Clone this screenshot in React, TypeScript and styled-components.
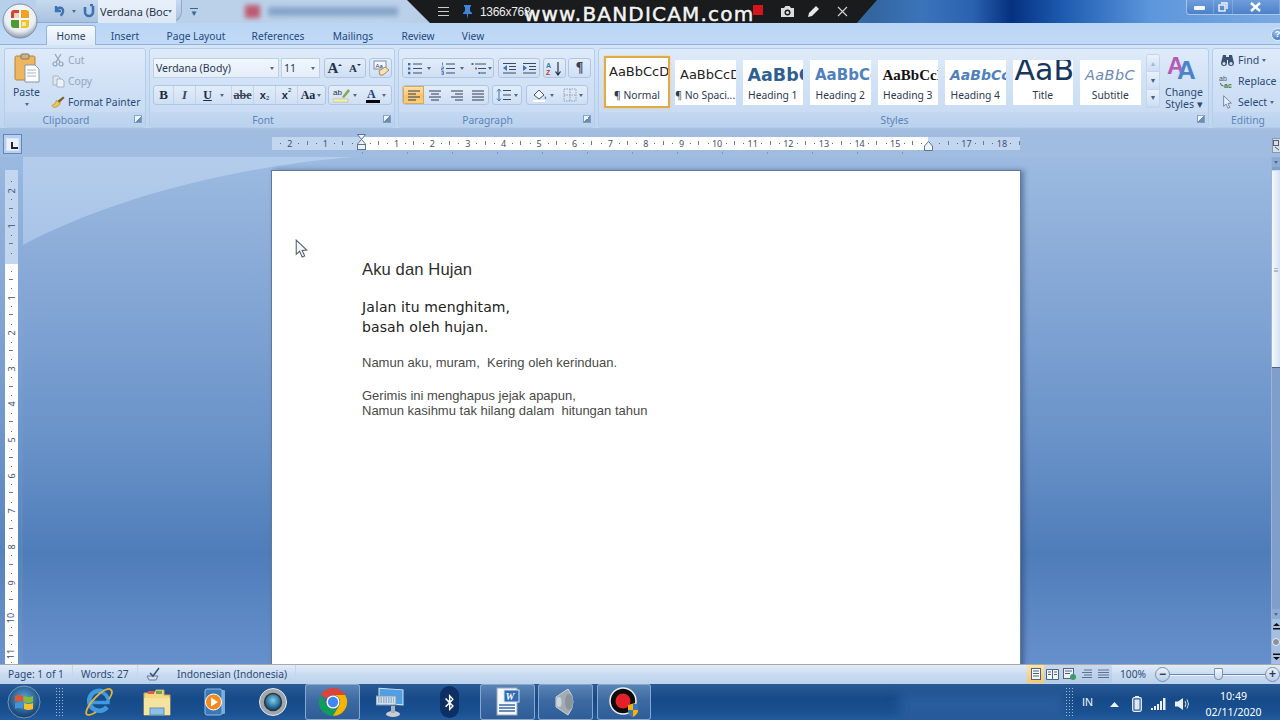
import React from "react";
import styled, { createGlobalStyle } from "styled-components";
import { FaBluetoothB } from "react-icons/fa";

const Global = createGlobalStyle`
  html, body { margin: 0; padding: 0; width: 1280px; height: 720px; overflow: hidden; background: #5d8ac8; }
  * { box-sizing: border-box; }
  #root { width: 1280px; height: 720px; }
`;

const UI = `"Noto Sans", "Open Sans", sans-serif`;

const Screen = styled.div`
  position: relative; width: 1280px; height: 720px; overflow: hidden;
  display: flex; flex-direction: column; font-family: ${UI}; font-size: 10.5px; color: #1f3a62;
`;

/* ---------- title bar ---------- */
const TitleBar = styled.div`
  position: relative; height: 23px; flex: none; display: flex; align-items: center; padding-left: 36px;
  background: linear-gradient(90deg, #b7cfe9 0, #bdd3ea 30%, #b9cfe8 33%, #33669f 68%, #3b74ba 72%, #2a62b0 76%, #05307f 79%, #1c5bb0 83%, #5d97dc 90%, #7aa9e0 100%);
`;
const Qat = styled.div`
  height: 23px; width: 146px; display: flex; align-items: center; gap: 0; padding-left: 14px;
  border: 1px solid #8ea9c9; border-top: 0; border-left: 0; border-radius: 0 0 12px 0;
  background: linear-gradient(#c6d9ee, #a9c3e0);
`;
const QatIcon = styled.span<{ $w: number }>`
  width: ${(p) => p.$w}px; display: flex; justify-content: center; align-items: center; height: 20px;
`;
const QatCombo = styled.div`
  width: 78px; height: 23px; display: flex; align-items: center; justify-content: space-between;
  background: linear-gradient(#e8f0fa, #dde8f5); padding: 0 5px 0 2px; color: #28374a; font-size: 11px; white-space: nowrap; overflow: hidden;
`;
const Customize = styled.span`
  margin-left: 8px; color: #3c6192; font-size: 8px; line-height: 8px; border-top: 1px solid #3c6192; margin-top: 1px;
`;
const BlurredTitle = styled.div`
  margin-left: 47px; display: flex; align-items: center; gap: 8px; filter: blur(2.5px);
`;
const BlurRed = styled.span`
  width: 15px; height: 13px; background: #bd5a6e; display: block;
`;
const BlurText = styled.span`
  width: 130px; height: 9px; background: #86a3ca; display: block;
`;
const WindowButtons = styled.div`
  position: absolute; right: 0; top: 0; height: 15px; width: 94px; display: flex;
  border: 1px solid #c9dcf3aa; border-top: 0; border-right: 0; border-radius: 0 0 0 4px;
  background: linear-gradient(#6f9ddc, #4c82c8);
`;
const WindowButton = styled.span<{ $w: number }>`
  width: ${(p) => p.$w}px; display: flex; align-items: center; justify-content: center;
  border-right: 1px solid #a9c5ea66;
`;
const OfficeOrbWrap = styled.div`
  position: absolute; left: 2px; top: 3px; width: 36px; height: 36px; z-index: 3;
`;

/* bandicam overlay */
const Bandicam = styled.div`
  position: absolute; left: 407px; top: 0; width: 470px; height: 23px; z-index: 4;
  background: #1a1b1d; clip-path: polygon(0 0, 100% 0, 95.7% 100%, 4.9% 100%);
  display: flex; align-items: center; color: #e8e8e8;
`;
const BarLines = styled.span`
  margin-left: 31px; width: 11px; height: 9px; border-top: 1px solid #ccc; border-bottom: 1px solid #ccc; position: relative;
  &::after { content: ""; position: absolute; left: 0; right: 0; top: 3px; border-top: 1px solid #ccc; }
`;
const BarPin = styled.span`
  margin-left: 14px; display: flex;
`;
const BarRes = styled.span`
  margin-left: 8px; font-family: "Liberation Sans", sans-serif; font-size: 12px; color: #eee; letter-spacing: -0.3px; width: 44px; white-space: nowrap;
`;
const Watermark = styled.span`
  font-family: "DejaVu Sans", sans-serif; font-size: 20px; font-weight: 400; color: #f4f4f4; letter-spacing: 1.2px;
  white-space: nowrap; width: 229px; -webkit-text-stroke: 0.5px #f4f4f4; text-shadow: 0 0 1px #000; margin-top: 5px; line-height: 18px;
`;
const RedSquare = styled.span`
  width: 10px; height: 10px; background: #d6141c; margin-top: -3px;
`;
const BarTool = styled.span<{ $ml: number }>`
  margin-left: ${(p) => p.$ml}px; display: flex;
`;

/* ---------- tabs ---------- */
const TabRow = styled.div`
  position: relative; height: 22px; flex: none; display: flex; align-items: flex-end; padding-left: 46px;
  background: linear-gradient(#bad5f5, #c2daf6); border-bottom: 1px solid #8fb4dc;
`;
const Tab = styled.div<{ $active?: boolean; $w: number }>`
  width: ${(p) => p.$w}px; height: 20px; display: flex; align-items: center; justify-content: center; padding-top: 1px;
  font-size: 10.2px; white-space: nowrap; color: ${(p) => (p.$active ? "#2a3f5f" : "#234a80")};
  margin-bottom: -1px;
  ${(p) => p.$active && `background: linear-gradient(#f8fbff, #dde9f8); border: 1px solid #94b6dc; border-bottom: 0; border-radius: 3px 3px 0 0;`}
`;
const Help = styled.span`
  position: absolute; right: -4px; top: 5px; width: 13px; height: 13px; border-radius: 50%;
  background: radial-gradient(circle at 40% 30%, #9cc4f0, #2a66b8); color: #fff; border: 1px solid #e6f0fc;
  font: bold 9px/11px "Liberation Sans", sans-serif; text-align: center;
`;

/* ---------- ribbon ---------- */
const Ribbon = styled.div`
  height: 85px; flex: none; display: flex; gap: 3px; padding: 3px 0 2px 4px;
  background: linear-gradient(#d5e5f8, #bfd6f1); border-bottom: 2px solid #a5c0dc;
`;
const Group = styled.section<{ $w: number }>`
  width: ${(p) => p.$w}px; flex: none; height: 80px; display: flex; flex-direction: column;
  background: linear-gradient(#dfebfa 0, #d5e4f7 30%, #c4d9f2 100%);
  border: 1px solid #b4cde8; border-radius: 3px; overflow: hidden;
`;
const GroupBody = styled.div<{ $pl?: number; $pt?: number }>`
  flex: 1; min-height: 0; display: flex; padding: ${(p) => p.$pt ?? 9}px 0 0 ${(p) => p.$pl ?? 3}px;
`;
const GroupLabel = styled.div<{ $plain?: boolean }>`
  height: 15px; flex: none; position: relative; text-align: center; line-height: 16px; font-size: 10.3px; color: #5d83b8;
  padding-right: ${(p) => (p.$plain ? 0 : 18)}px;
  background: linear-gradient(#c3d8f1, #bad2ee);
`;
const Launcher = styled.span`
  position: absolute; right: 3px; top: 3px; width: 8px; height: 8px; border: 1px solid #7f9dc4; border-top-color: #8fa8cc; background: linear-gradient(135deg, #eef4fb 50%, #6c8cb8 50%);
`;
const PasteCol = styled.div`
  width: 43px; flex: none; display: flex; flex-direction: column; align-items: center; margin-top: -5px; margin-left: -3px; color: #2c4a75;
`;
const PasteLabel = styled.span`
  margin-top: 2px; margin-bottom: 4px; line-height: 14px; font-size: 10.5px;
`;
const Caret = styled.span`
  display: inline-block; width: 0; height: 0; border: 2.5px solid transparent; border-top: 3px solid #55688a; border-bottom: 0; flex: none;
`;
const ClipCol = styled.div`
  display: flex; flex-direction: column; gap: 5px; margin-top: -6px; margin-left: 3px;
`;
const ClipItem = styled.div<{ $off?: boolean }>`
  display: flex; align-items: center; height: 16px; gap: 3px; white-space: nowrap; font-size: 10.3px;
  color: ${(p) => (p.$off ? "#93a6c0" : "#2a4a78")};
`;
const ClipIcon = styled.span`
  width: 14px; display: flex; justify-content: center;
`;
const Col = styled.div`
  display: flex; flex-direction: column; gap: 7px;
`;
const Row = styled.div`
  display: flex; align-items: center; height: 20px;
`;
const Combo = styled.div<{ $w: number; $ml?: number }>`
  width: ${(p) => p.$w}px; height: 20px; display: flex; align-items: center; justify-content: space-between; padding: 0 4px 0 2px;
  margin-left: ${(p) => p.$ml ?? 0}px;
  background: linear-gradient(#f2f7fd, #e4edf9); border: 1px solid #bdd0e8; font-size: 10.5px; color: #2a3750;
`;
const BtnGroup = styled.div<{ $w: number; $ml?: number }>`
  width: ${(p) => p.$w}px; height: 20px; display: flex; align-items: center; flex: none; margin-left: ${(p) => p.$ml ?? 0}px;
  background: linear-gradient(#e3edfa, #cfdff3); border: 1px solid #aec6e4; border-radius: 3px; overflow: hidden;
`;
const Btn = styled.span<{ $w: number; $active?: boolean; $sep?: boolean; $gap?: number }>`
  width: ${(p) => p.$w}px; height: 18px; flex: none; display: flex; align-items: center; justify-content: center; gap: ${(p) => p.$gap ?? 2}px;
  font-family: "Liberation Sans", sans-serif; color: #1c2a40; font-size: 11px;
  ${(p) => p.$sep && "border-right: 1px solid #c3d4ea;"}
  ${(p) => p.$active && "background: linear-gradient(#fde5ae, #fbc264 60%, #fbd17f); box-shadow: inset 0 0 0 1px #d6a85c;"}
`;
const BoldMark = styled.b`
  font-family: "Liberation Serif", serif; font-size: 13px;
`;
const ItalicMark = styled.i`
  font-family: "Liberation Serif", serif; font-size: 13px; font-weight: bold; color: #3b4a60;
`;
const UnderMark = styled.u`
  font-family: "Liberation Serif", serif; font-weight: bold; font-size: 12px;
`;
const StrikeMark = styled.s`
  font-family: "Liberation Serif", serif; font-size: 12px; font-weight: bold; color: #3a4558;
`;
const ScriptMark = styled.span`
  font-size: 11px; font-weight: bold; display: flex; color: #1c2a40;
`;
const SubMark = styled.small<{ $up?: boolean }>`
  font-size: 6px; font-weight: normal; margin-top: ${(p) => (p.$up ? -2 : 6)}px;
`;
const AaMark = styled.span`
  font-family: "Liberation Serif", serif; font-size: 12px; font-weight: bold;
`;
const GrowMark = styled.span<{ $small?: boolean }>`
  font-family: "Liberation Serif", serif; font-weight: bold; font-size: ${(p) => (p.$small ? 11 : 15)}px; color: #25344c; position: relative; padding-right: 4px;
  &::after { content: ""; position: absolute; right: 0; top: 2px; border: 2px solid transparent; ${(p) => (p.$small ? "border-top: 2px solid #25344c;" : "border-bottom: 2px solid #25344c;")} }
`;
const PilcrowMark = styled.span`
  font-family: "Liberation Serif", serif; font-size: 14px; font-weight: bold; color: #33415a;
`;

/* styles gallery */
const Gallery = styled.div`
  display: flex; align-items: center; gap: 7px; height: 54px; padding-left: 5px; width: 544px; flex: none; margin-top: -3px;
`;
const StyleCard = styled.div<{ $active?: boolean }>`
  width: ${(p) => (p.$active ? 66 : 60.5)}px; height: ${(p) => (p.$active ? 52 : 45)}px; flex: none; background: #fff; overflow: hidden;
  display: flex; flex-direction: column; align-items: center; margin-right: ${(p) => (p.$active ? -2 : 0)}px;
  ${(p) => p.$active && "border: 2px solid #e2a948; box-shadow: 0 0 2px #f7c970; padding-top: 2px;"}
`;
const Sample = styled.div<{ $size: number; $color?: string; $bold?: boolean; $italic?: boolean; $serif?: boolean; $ls?: number; $top?: number; $pl?: number }>`
  height: 27px; width: 100%; flex: none; overflow: hidden; white-space: nowrap; padding-left: ${(p) => p.$pl ?? 5}px; line-height: 30px;
  font-family: ${(p) => (p.$serif ? '"Liberation Serif", serif' : '"DejaVu Sans", sans-serif')};
  font-size: ${(p) => p.$size}px; color: ${(p) => p.$color ?? "#222"}; font-weight: ${(p) => (p.$bold ? 700 : 400)};
  font-style: ${(p) => (p.$italic ? "italic" : "normal")}; letter-spacing: ${(p) => p.$ls ?? 0}px;
  ${(p) => p.$top !== undefined && `line-height: ${p.$top}px;`}
`;
const SampleLabel = styled.div`
  font-size: 10.3px; line-height: 16px; color: #2c3a50; white-space: nowrap;
`;
const GalleryScroll = styled.div`
  width: 14px; height: 54px; flex: none; margin: -4px 0 0 3px; display: flex; flex-direction: column; border: 1px solid #c3d6ee; border-radius: 2px;
`;
const ScrollCell = styled.span<{ $off?: boolean }>`
  flex: 1; display: flex; align-items: center; justify-content: center; background: linear-gradient(#e9f1fb, #cddff4);
  border-bottom: 1px solid #c3d6ee; color: ${(p) => (p.$off ? "#a8b8cc" : "#46608a")}; font-size: 7px; line-height: 7px;
`;
const ChangeStyles = styled.div`
  width: 46px; flex: none; margin: -6px 0 0 1px; display: flex; flex-direction: column; align-items: center; gap: 4px; line-height: 12px; font-size: 10.5px; color: #2c4a75; text-align: center;
`;
const EditItem = styled.div`
  display: flex; align-items: center; gap: 3px; height: 16px; font-size: 10.5px; color: #2a4a78; white-space: nowrap;
`;
const EditIcon = styled.span`
  width: 16px; flex: none; display: flex; justify-content: center;
`;
const EditCol = styled.div`
  display: flex; flex-direction: column; gap: 5px; margin: -6px 0 0 3px;
`;

/* ---------- ruler row ---------- */
const RulerRow = styled.div`
  position: relative; height: 27px; flex: none; background: #a0bde1; display: flex; align-items: flex-start;
`;
const TabStopBtn = styled.div`
  position: absolute; left: 3px; top: 4px; width: 19px; height: 20px; border: 1px solid #5e86c0; background: #b8d0ee; display: flex; align-items: center; justify-content: center;
`;
const TabStopInner = styled.span`
  width: 13px; height: 13px; border: 1px solid #d8e6f6; background: #eaf1fa; position: relative;
  &::after { content: ""; position: absolute; left: 4px; top: 3px; width: 5px; height: 5px; border-left: 2px solid #22262c; border-bottom: 2px solid #22262c; }
`;
const HRuler = styled.div`
  margin: 7px 0 0 272px; width: 748px; height: 13px; display: flex; position: relative;
  background: linear-gradient(90deg, #c3d6ef 90px, #fff 90px, #fff 656px, #c3d6ef 656px);
`;
const HCell = styled.span`
  width: 35.62px; flex: none; text-align: center; line-height: 13px; font-size: 9px; color: #3f5270; font-family: "Noto Sans", sans-serif;
  background-image: linear-gradient(#5a6a80, #5a6a80), linear-gradient(#5a6a80, #5a6a80), linear-gradient(#6a7a90, #6a7a90);
  background-repeat: no-repeat;
  background-size: 1px 1px, 1px 1px, 1px 4px;
  background-position: calc(50% - 9px) 6px, calc(50% + 9px) 6px, 100% 4px;
`;
const IndentTop = styled.span`
  position: absolute; left: 85px; top: -3px; width: 9px; height: 19px; display: flex;
`;
const IndentRight = styled.span`
  position: absolute; left: 652px; top: 4px; width: 9px; height: 10px; display: flex;
`;
const StopTicks = styled.span`
  position: absolute; left: 362px; top: 22px; width: 566px; height: 2px;
  background: repeating-linear-gradient(90deg, #7f97ba 0, #7f97ba 1px, transparent 1px, transparent 45px);
`;
const RulerToggle = styled.span`
  margin: 8px 0 0 auto; width: 8px; height: 15px; background: #d8dfe8; border: 1px solid #8b97a8; border-right: 0; display: flex; align-items: center; justify-content: center;
`;

/* ---------- document ---------- */
const DocRow = styled.div`
  flex: 1; min-height: 0; display: flex; position: relative; overflow: hidden;
  background: linear-gradient(#9dbbe1 0, #86a8d6 25%, #6a93c9 55%, #4f7db9 78%, #6690cb 100%);
`;
const Swoosh = styled.div`
  position: absolute; left: 23px; top: 0; width: 330px; height: 92px;
  background: linear-gradient(#b5cdec, #a6c3e7);
  clip-path: path("M0 0 H330 C 230 8, 100 35, 0 88 Z");
`;
const VRulerCol = styled.div`
  position: relative; width: 23px; flex: none; padding: 13px 0 0 5px; z-index: 1; background: #8eafdc22;
`;
const VRuler = styled.div`
  width: 13px; height: 494px; overflow: hidden; display: flex; flex-direction: column; padding-top: 3px;
  background: linear-gradient(#c3d6ef 94px, #fff 94px);
`;
const VCell = styled.span`
  height: 35.62px; flex: none; display: flex; align-items: center; justify-content: center; font-size: 9px; color: #3f5270;
  background-image: linear-gradient(#5a6a80, #5a6a80), linear-gradient(#5a6a80, #5a6a80), linear-gradient(#6a7a90, #6a7a90);
  background-repeat: no-repeat; background-size: 1px 1px, 1px 1px, 4px 1px;
  background-position: 6px calc(50% - 9px), 6px calc(50% + 9px), 4px 100%;
`;
const VNum = styled.span`
  transform: rotate(-90deg); display: block; line-height: 10px;
`;
const PageArea = styled.div`
  position: relative; flex: 1; min-width: 0; padding: 14px 0 0 249px; z-index: 1;
`;
const Page = styled.main`
  position: relative; width: 748px; height: 520px; background: #fff; padding: 89px 0 0 90px;
  box-shadow: 0 0 0 1px #5f7a9c, 3px 0 5px 1px rgba(30,50,90,.45);
`;
const PoemTitle = styled.h1`
  margin: 0; font: 400 16.6px/20px "Liberation Sans", sans-serif; color: #2f2f2f; letter-spacing: 0.1px;
`;
const PoemLead = styled.p`
  margin: 17px 0 0; font: 400 14px/20px "DejaVu Sans", sans-serif; color: #222; white-space: pre-line; letter-spacing: 0.1px;
`;
const PoemBody = styled.p<{ $mt: number }>`
  margin: ${(p) => p.$mt}px 0 0; font: 400 13px/15px "Liberation Sans", sans-serif; color: #4a4a4a; white-space: pre-wrap;
`;
const Cursor = styled.span`
  position: absolute; left: 23px; top: 68px; display: flex;
`;
const VScroll = styled.div`
  width: 9px; flex: none; display: flex; flex-direction: column; background: #7f9ec9; border-left: 1px solid #9ab5d9; z-index: 1;
`;
const ScrollArrow = styled.span`
  height: 10px; flex: none; display: flex; align-items: center; justify-content: center; background: #8dabd5;
`;
const ScrollThumb = styled.span`
  height: 198px; flex: none; margin-top: 3px; background: linear-gradient(90deg, #f6f9fd, #d5e2f2); border-bottom: 1px solid #4a648c; border-top: 1px solid #c9d9ee; display: flex; align-items: center; justify-content: center;
  color: #7f8fa8; font-size: 8px;
`;
const ScrollTrack = styled.span`
  flex: 1;
`;
const ScrollNav = styled.span`
  height: 15px; flex: none; display: flex; align-items: center; justify-content: center; background: #a5bfe2;
`;

/* ---------- status bar ---------- */
const StatusBar = styled.footer`
  height: 20px; flex: none; display: flex; align-items: center; position: relative; padding-bottom: 1px;
  background: linear-gradient(#e2ecf9, #c9dbf1 50%, #bcd2ec); border-top: 1px solid #a9a9a9; font-size: 10.2px; color: #2e4a74;
`;
const StatusCell = styled.span<{ $w: number; $pl: number; $noSep?: boolean }>`
  width: ${(p) => p.$w}px; padding-left: ${(p) => p.$pl}px; height: 100%; display: flex; align-items: center; white-space: nowrap;
  ${(p) => !p.$noSep && "border-right: 1px solid #c5d6ea;"}
`;
const StatusRight = styled.div`
  margin-left: auto; display: flex; align-items: center; height: 100%;
`;
const Views = styled.div`
  width: 85px; height: 18px; display: flex; margin-right: 8px; background: linear-gradient(#c8d9ef, #b4cbe7); border-radius: 2px;
`;
const ViewBtn = styled.span<{ $active?: boolean }>`
  width: 17px; display: flex; align-items: center; justify-content: center;
  ${(p) => p.$active && "background: linear-gradient(#fde4a8, #f8c866);"}
`;
const Zoom = styled.span`
  width: 26px; color: #2e4a74; margin-right: 9px; white-space: nowrap;
`;
const RoundBtn = styled.span`
  width: 15px; height: 15px; border-radius: 50%; border: 1px solid #7990b0; background: linear-gradient(#eef4fb, #b9cce5); display: flex; align-items: center; justify-content: center;
  color: #2a3a54; font: bold 12px/12px "Liberation Sans", sans-serif; flex: none;
`;
const ZoomTrack = styled.span`
  width: 95px; height: 1px; background: #6c87ad; position: relative; box-shadow: 0 1px 0 #eef4fb;
`;
const ZoomThumb = styled.span`
  position: absolute; left: 44px; top: -6px; width: 9px; height: 12px; background: linear-gradient(#f4f8fd, #c6d6ea); border: 1px solid #7990b0; border-radius: 1px 1px 4px 4px;
`;

/* ---------- taskbar ---------- */
const Taskbar = styled.nav`
  height: 36px; flex: none; display: flex; align-items: center; position: relative; overflow: hidden;
  background: linear-gradient(#2a5a96, #164a88 40%, #1a5192 80%, #235c9e);
`;
const Orb = styled.span`
  width: 46px; display: flex; justify-content: center; margin-left: 1px;
`;
const Gripper = styled.span<{ $ml: number; $mr: number }>`
  width: 8px; height: 30px; flex: none; margin: 0 ${(p) => p.$mr}px 0 ${(p) => p.$ml}px;
  background-image: radial-gradient(circle, #9fb8d6 0.7px, transparent 1px);
  background-size: 3px 3px;
`;
const Slot = styled.span<{ $active?: boolean; $w?: number; $ml?: number; $mr?: number }>`
  width: ${(p) => p.$w ?? 58}px; height: 36px; flex: none; display: flex; align-items: center; justify-content: center;
  margin: 0 ${(p) => p.$mr ?? 0}px 0 ${(p) => p.$ml ?? 0}px;
  ${(p) => p.$active && "background: linear-gradient(#5c86b6, #3d6aa2 45%, #2e5c98); box-shadow: inset 0 0 0 1px #86a8cf; border-radius: 3px;"}
`;
const TrayBlur = styled.div`
  position: absolute; left: 900px; top: 8px; width: 165px; height: 28px; background: #2a5c9c; filter: blur(6px);
`;
const Tray = styled.div`
  margin-left: auto; height: 100%; display: flex; align-items: center; color: #f0f5fb; position: relative;
`;
const TrayLang = styled.span`
  font: 11px "Liberation Sans", sans-serif; width: 26px; margin-top: -1px;
`;
const TrayIcon = styled.span<{ $w: number; $ml?: number; $mt?: number }>`
  width: ${(p) => p.$w}px; display: flex; justify-content: center; margin-left: ${(p) => p.$ml ?? 0}px; margin-top: ${(p) => p.$mt ?? 0}px;
`;
const Clock = styled.div`
  width: 84px; text-align: center; font: 10.5px/16px "Noto Sans", sans-serif; color: #fff; padding: 3px 9px 0 0; white-space: nowrap;
`;

/* ---------- drawings ---------- */
const OfficeOrb = () => (
  <svg width="36" height="36" viewBox="0 0 36 36">
    <defs>
      <radialGradient id="oo" cx="50%" cy="35%" r="65%">
        <stop offset="0" stopColor="#ffffff" /><stop offset=".7" stopColor="#e8eef4" /><stop offset="1" stopColor="#8c97a8" />
      </radialGradient>
    </defs>
    <circle cx="18" cy="18" r="17" fill="url(#oo)" stroke="#7f8ea3" />
    <path d="M9 10 q0-3 3-3 h5 v8 h-8z" fill="#d8452a" />
    <path d="M19 7 h5 q3 0 3 3 v5 h-8z" fill="#f2a31e" />
    <path d="M9 17 h8 v8 h-5 q-3 0-3-3z" fill="#4f9a34" />
    <path d="M19 17 h8 v5 q0 3-3 3 h-5z" fill="#f0c32a" />
    <rect x="12" y="10" width="5" height="5" fill="#fff" opacity=".75" />
    <rect x="20" y="19" width="4" height="4" fill="#fff" opacity=".6" />
  </svg>
);
const Undo = () => (
  <svg width="14" height="14" viewBox="0 0 14 14" fill="none" stroke="#3f71b5" strokeWidth="2.4">
    <path d="M4 2 v5 h5" /><path d="M4 7 C6 2 12 3 11 8 q-.4 2-2.5 3.5" />
  </svg>
);
const Redo = () => (
  <svg width="14" height="14" viewBox="0 0 14 14" fill="none" stroke="#3f71b5" strokeWidth="2.6">
    <path d="M3 3 v5 a4 4 0 0 0 8 0 v-6" /><path d="M11 1 h-3" />
  </svg>
);
const PasteIcon = () => (
  <svg width="26" height="30" viewBox="0 0 26 30">
    <rect x="1" y="3" width="20" height="24" rx="1.5" fill="#eeb65f" stroke="#b5823c" />
    <rect x="7" y="1" width="8" height="5" rx="1" fill="#c8b48c" stroke="#8a7650" />
    <path d="M11 12 h10 l4 4 v13 h-14z" fill="#fff" stroke="#8796ad" />
    <path d="M13 17 h9 M13 20 h9 M13 23 h9" stroke="#a5b2c5" />
  </svg>
);
const CutIcon = () => (
  <svg width="12" height="14" viewBox="0 0 12 14" fill="none" stroke="#93a3b8" strokeWidth="1.2">
    <path d="M3 1 L8 9 M9 1 L4 9" /><circle cx="3" cy="11" r="2" /><circle cx="9" cy="11" r="2" />
  </svg>
);
const CopyIcon = () => (
  <svg width="13" height="13" viewBox="0 0 13 13">
    <path d="M1 1 h5 l2 2 v7 h-7z" fill="#dfe6ef" stroke="#a7b4c6" />
    <path d="M5 4 h5 l2 2 v6 h-7z" fill="#eef2f7" stroke="#a7b4c6" />
  </svg>
);
const Painter = () => (
  <svg width="15" height="14" viewBox="0 0 15 14">
    <path d="M7 6 L13 1 L14.5 2.5 L9 8z" fill="#7d5a2e" />
    <path d="M1 11 Q5 9 6 5 L10 9 Q7 13 3 13z" fill="#f0c34a" stroke="#9a7c2a" strokeWidth=".6" />
  </svg>
);
const Bars = ({ kind, c = "#2f3f58" }: { kind: string; c?: string }) => {
  const l: Record<string, string> = {
    left: "M1 2h12M1 5h8M1 8h12M1 11h8",
    center: "M1 2h12M3 5h8M1 8h12M3 11h8",
    right: "M1 2h12M5 5h8M1 8h12M5 11h8",
    justify: "M1 2h12M1 5h12M1 8h12M1 11h12",
  };
  return <svg width="14" height="13" viewBox="0 0 14 13" fill="none" stroke={c}><path d={l[kind]} /></svg>;
};
const Bullets = () => (
  <svg width="14" height="13" viewBox="0 0 14 13">
    <path d="M5 2h9M5 6.5h9M5 11h9" stroke="#3b4f70" />
    <rect x="0" y="1" width="2.4" height="2.4" fill="#3a6fb0" /><rect x="0" y="5.4" width="2.4" height="2.4" fill="#3a6fb0" /><rect x="0" y="9.8" width="2.4" height="2.4" fill="#3a6fb0" />
  </svg>
);
const Numbers = () => (
  <svg width="14" height="13" viewBox="0 0 14 13">
    <path d="M5 2h9M5 6.5h9M5 11h9" stroke="#3b4f70" />
    <path d="M1.5 0.5v3M0.5 5h2v1.5h-2v1.5h2M0.5 9.5h2v3h-2M0.5 11h2" stroke="#3a6fb0" fill="none" strokeWidth=".8" />
  </svg>
);
const Multi = () => (
  <svg width="15" height="13" viewBox="0 0 15 13">
    <path d="M4 2h11M7 6.5h8M10 11h5" stroke="#3b4f70" />
    <rect x="0.5" y="1" width="2" height="2" fill="#3a6fb0" /><rect x="4" y="5.5" width="2" height="2" fill="#b86a3a" /><rect x="7.5" y="10" width="2" height="2" fill="#3a6fb0" />
  </svg>
);
const Indent = ({ dir }: { dir: "l" | "r" }) => (
  <svg width="15" height="13" viewBox="0 0 15 13">
    <path d="M1 1.5h13M7 4.5h7M7 7.5h7M1 11h13" stroke="#3b4a60" />
    <path d={dir === "l" ? "M1 6 L5 3 V9z" : "M5 6 L1 3 V9z"} fill="#3d74bd" />
  </svg>
);
const Sort = () => (
  <svg width="17" height="15" viewBox="0 0 17 15">
    <text x="0" y="6.5" fontSize="7" fontWeight="700" fill="#3d74bd" fontFamily="Liberation Sans">A</text>
    <text x="0" y="14" fontSize="7" fontWeight="700" fill="#c0392b" fontFamily="Liberation Sans">Z</text>
    <path d="M12 1v12M9.5 10.5L12 14l2.5-3.5" stroke="#22303f" fill="none" strokeWidth="1.2" />
  </svg>
);
const LineSpacing = () => (
  <svg width="16" height="14" viewBox="0 0 16 14">
    <path d="M3 1v12" stroke="#3d74bd" /><path d="M1 3.5L3 1l2 2.5M1 10.5L3 13l2-2.5" fill="none" stroke="#3d74bd" />
    <path d="M7 2.5h8M7 7h8M7 11.5h8" stroke="#3b4a60" />
  </svg>
);
const Bucket = () => (
  <svg width="16" height="15" viewBox="0 0 16 15">
    <path d="M2 7 L7 2 L12 7 L7 11z" fill="#f5f7fa" stroke="#44556e" />
    <path d="M13 8 q2 2 1 3 q-2 0-1-3z" fill="#3d74bd" /><path d="M1 13h12" stroke="#fff" strokeWidth="2" />
  </svg>
);
const Borders = () => (
  <svg width="14" height="14" viewBox="0 0 14 14" fill="none" stroke="#8fa0b8" strokeDasharray="1.5 1">
    <rect x="1" y="1" width="12" height="12" /><path d="M7 1v12M1 7h12" />
  </svg>
);
const Highlighter = () => (
  <svg width="18" height="16" viewBox="0 0 18 16">
    <text x="0" y="8" fontSize="8" fontFamily="Liberation Sans" fill="#24324a">ab</text>
    <path d="M9 10 L15 2 L17 4 L11 11z" fill="#7faa50" />
    <rect x="0" y="12" width="15" height="3" fill="#f7f3a0" stroke="#a7a78a" strokeWidth=".5" />
  </svg>
);
const ClearFmt = () => (
  <svg width="20" height="17" viewBox="0 0 20 17">
    <rect x="3" y="1" width="12" height="8" fill="#f3f6fb" stroke="#7f8fa6" />
    <text x="4.5" y="7.5" fontSize="6" fontFamily="Liberation Sans" fill="#2f3f58">Aa</text>
    <path d="M8 11 L14 7 L18 10 L12 15 H9z" fill="#f6e2ba" stroke="#b08b52" />
  </svg>
);
const StylesA = () => (
  <svg width="34" height="30" viewBox="0 0 34 30">
    <text x="0" y="22" fontSize="24" fontWeight="700" fill="#b45bb4" fontFamily="Liberation Sans">A</text>
    <text x="10" y="27" fontSize="26" fontWeight="700" fill="#4c84c8" fontFamily="Liberation Sans">A</text>
  </svg>
);
const Binoculars = () => (
  <svg width="15" height="13" viewBox="0 0 15 13" fill="#3b5272">
    <path d="M3 1h3v2h3V1h3l2 8a3 3 0 1 1-6 0V6H7v3a3 3 0 1 1-6 0z" /><circle cx="4" cy="9.5" r="1.5" fill="#cfe0f5" /><circle cx="11" cy="9.5" r="1.5" fill="#cfe0f5" />
  </svg>
);
const ReplaceIco = () => (
  <svg width="16" height="15" viewBox="0 0 16 15">
    <text x="0" y="6.5" fontSize="7" fill="#4a5a72" fontFamily="Liberation Sans">ab</text>
    <text x="5" y="14" fontSize="7" fontWeight="700" fill="#3f7a2c" fontFamily="Liberation Sans">ac</text>
    <path d="M1.5 9 q0 3 3 3" fill="none" stroke="#4a5a72" />
  </svg>
);
const Arrow = ({ w = 13, h = 19, fill = "#f4f6f9", stroke = "#55606e" }: { w?: number; h?: number; fill?: string; stroke?: string }) => (
  <svg width={w} height={h} viewBox="0 0 12 18" fill={fill} stroke={stroke} strokeWidth="1">
    <path d="M1 1 V14.5 L4.2 11.6 L6.6 17 L9 16 L6.6 10.8 L11 10.5z" />
  </svg>
);
const Hourglass = () => (
  <svg width="9" height="19" viewBox="0 0 9 19" fill="#eef3fa" stroke="#5f7490">
    <path d="M.5.5h8L4.5 5.5z" /><path d="M4.5 5.5 L8.5 10 V10.5 H.5 V10z" /><rect x=".5" y="10.5" width="8" height="5" />
  </svg>
);
const TriMarker = () => (
  <svg width="9" height="10" viewBox="0 0 9 10" fill="#eef3fa" stroke="#5f7490">
    <path d="M4.5.5 L8.5 5 V9.5 H.5 V5z" />
  </svg>
);
const StartOrb = () => (
  <svg width="34" height="34" viewBox="0 0 34 34">
    <defs>
      <radialGradient id="st" cx="50%" cy="40%" r="60%"><stop offset="0" stopColor="#5aa8d8" /><stop offset="1" stopColor="#123c6e" /></radialGradient>
    </defs>
    <circle cx="17" cy="17" r="16" fill="url(#st)" stroke="#9ab4cf" strokeOpacity=".7" />
    <path d="M8 11 q4-2 8 0 v6 q-4-2-8 0z" fill="#e2562f" />
    <path d="M17 11 q4 2 9 0 v6 q-5 2-9 0z" fill="#83ba3a" />
    <path d="M8 18 q4-2 8 0 v6 q-4-2-8 0z" fill="#3f93d8" />
    <path d="M17 18 q4 2 9 0 v6 q-5 2-9 0z" fill="#f4c12c" />
  </svg>
);
const IEIcon = () => (
  <svg width="32" height="32" viewBox="0 0 32 32" fill="none">
    <path d="M21 6 A10 10 0 1 0 24 21" stroke="#3f9be0" strokeWidth="4.5" />
    <path d="M8 16.5 H25 A9 9 0 0 0 15 6" stroke="#3f9be0" strokeWidth="3.5" />
    <path d="M27 3 C20 2 4 18 3 27 C4 31 10 28 13 26" stroke="#e2b23a" strokeWidth="1.8" />
    <path d="M27 3 C31 5 28 10 26 13" stroke="#e2b23a" strokeWidth="1.8" />
  </svg>
);
const FolderIcon = () => (
  <svg width="30" height="30" viewBox="0 0 30 30">
    <path d="M2 6 h10 l2 -3 h8 v5 h6 v20 H2z" fill="#f4d77c" stroke="#c8a85a" />
    <rect x="6" y="4" width="6" height="3" fill="#e45a42" /><rect x="14" y="4" width="6" height="3" fill="#67a95c" />
    <rect x="2" y="11" width="26" height="17" fill="#f7e3a0" />
    <rect x="8" y="21" width="14" height="7" fill="#8ec0e4" stroke="#5f93bd" />
  </svg>
);
const WmpIcon = () => (
  <svg width="26" height="30" viewBox="0 0 26 30">
    <rect x="5" y="3" width="18" height="24" rx="1" fill="#75a9d8" />
    <rect x="3" y="2" width="17" height="26" rx="2" fill="#3a78b8" stroke="#8fbde2" />
    <circle cx="11.5" cy="15" r="8" fill="#f58a1c" stroke="#fff" />
    <path d="M9 10.5 L16 15 L9 19.5z" fill="#fff" />
  </svg>
);
const GlobeIcon = () => (
  <svg width="30" height="30" viewBox="0 0 30 30">
    <defs><radialGradient id="gl" cx="50%" cy="40%" r="55%"><stop offset="0" stopColor="#7fd0ee" /><stop offset="1" stopColor="#0a4a78" /></radialGradient></defs>
    <circle cx="15" cy="15" r="13.5" fill="#9fa7ac" stroke="#e4e8ea" />
    <circle cx="15" cy="15" r="8.5" fill="url(#gl)" stroke="#30363c" strokeWidth="1.4" />
  </svg>
);
const ChromeIcon = () => (
  <svg width="30" height="30" viewBox="0 0 32 32">
    <path d="M16 1 A15 15 0 0 1 29 8.5 L16 8.5 A7.5 7.5 0 0 0 9.5 12.3 L3 8.5 A15 15 0 0 1 16 1z" fill="#db4437" />
    <path d="M3 8.5 A15 15 0 0 0 16 31 L22.5 19.8 A7.5 7.5 0 0 1 9.5 19.8z" fill="#0f9d58" />
    <path d="M29 8.5 A15 15 0 0 1 16 31 L22.5 19.8 A7.5 7.5 0 0 0 16 8.5z" fill="#f4b400" />
    <circle cx="16" cy="16" r="7" fill="#fff" /><circle cx="16" cy="16" r="5.5" fill="#4285f4" />
  </svg>
);
const ComputerIcon = () => (
  <svg width="30" height="32" viewBox="0 0 30 32">
    <rect x="3" y="2" width="24" height="15" fill="#4f9fe4" stroke="#d8e6f4" transform="skewY(4)" />
    <rect x="0" y="10" width="20" height="9" fill="#cfe0f0" stroke="#7f97b0" />
    <path d="M2 12h16M2 14h16M2 16h16" stroke="#6f8ba8" strokeDasharray="1.5 1" />
    <ellipse cx="17" cy="28" rx="7" ry="3" fill="#c8ced4" /><rect x="15" y="20" width="4" height="7" fill="#aab2ba" />
  </svg>
);
const BtBadge = styled.span`
  width: 19px; height: 32px; border-radius: 10px; background: #0d2f63; color: #fff; display: flex; align-items: center; justify-content: center; font-size: 17px;
`;
const WordIcon = () => (
  <svg width="26" height="30" viewBox="0 0 26 30">
    <rect x="2" y="1" width="20" height="27" fill="#f6f8fb" stroke="#9aa8bc" />
    <path d="M4 18h16M4 21h16M4 24h16" stroke="#3a68a8" strokeWidth="1.4" />
    <rect x="9" y="3" width="15" height="12" fill="#2f6cb5" stroke="#d5e3f3" />
    <text x="10.5" y="13" fontSize="10" fontWeight="700" fontStyle="italic" fill="#fff" fontFamily="Liberation Serif">W</text>
  </svg>
);
const SpeakerIcon = () => (
  <svg width="26" height="30" viewBox="0 0 26 30">
    <path d="M3 10 L15 2 Q25 15 15 28 L3 20z" fill="#a3acb5" stroke="#cdd3d8" />
    <ellipse cx="16" cy="15" rx="4" ry="8" fill="#8b949d" />
    <ellipse cx="6" cy="15" rx="2.5" ry="5" fill="#cfd5da" />
  </svg>
);
const RecordIcon = () => (
  <svg width="30" height="32" viewBox="0 0 30 32">
    <circle cx="14" cy="15" r="13" fill="#0c0c0c" stroke="#eef1f4" strokeWidth="1.5" />
    <circle cx="14" cy="15" r="7.5" fill="#e5202a" />
    <path d="M19 19 L26 17 L29 19 V26 Q27 30 24 31 Q20 29 19 26z" fill="#f4b400" />
    <path d="M24 18 h5 V24 H24z M19 24 h5 v7 Q20 29 19 26z" fill="#3d74bd" />
  </svg>
);
const Battery = () => (
  <svg width="10" height="16" viewBox="0 0 10 16" fill="none">
    <rect x="3" y="0" width="4" height="2" fill="#e4ecf4" /><rect x=".7" y="1.7" width="8.6" height="13.6" rx="1.5" stroke="#eaf0f6" strokeWidth="1.3" fill="#2a5c9c" />
    <rect x="2.5" y="3.5" width="5" height="10" fill="#dfe8f1" />
  </svg>
);
const Signal = () => (
  <svg width="16" height="14" viewBox="0 0 16 14" fill="#eaf0f6">
    <rect x="0" y="11" width="2" height="2" /><rect x="3" y="9" width="2" height="4" /><rect x="6" y="7" width="2" height="6" /><rect x="9" y="4" width="2" height="9" /><rect x="12" y="1" width="2.5" height="12" />
  </svg>
);
const Volume = () => (
  <svg width="16" height="14" viewBox="0 0 16 14">
    <path d="M1 4.5h3L9 1v12L4 9.5H1z" fill="#eaf0f6" /><path d="M11 4q2 3 0 6M13 2.5q3 4.5 0 9" stroke="#cfd9e5" fill="none" />
  </svg>
);
const ViewIcon = ({ c = "#4f6485" }: { c?: string }) => (
  <svg width="12" height="12" viewBox="0 0 12 12" fill="none" stroke={c}><rect x="1.5" y=".5" width="9" height="11" fill="#f4f7fb" /><path d="M3 3h6M3 5.5h6M3 8h6" /></svg>
);
const ViewBook = () => (
  <svg width="13" height="12" viewBox="0 0 13 12" fill="#f4f7fb" stroke="#4f6485"><path d="M.5 1.5h6v10h-6zM6.5 1.5h6v10h-6z" /><path d="M2 4h3M2 6.5h3M8 4h3M8 6.5h3" /></svg>
);
const ViewWeb = () => (
  <svg width="13" height="12" viewBox="0 0 13 12" fill="none"><rect x=".5" y=".5" width="10" height="10" fill="#eef2f8" stroke="#4f6485" /><path d="M2 3h7M2 5.5h5" stroke="#4f6485" /><circle cx="10" cy="9" r="3" fill="#3f9a6a" /></svg>
);
const ViewLines = ({ dense }: { dense?: boolean }) => (
  <svg width="13" height="12" viewBox="0 0 13 12" stroke="#5d7191" fill="none"><path d={dense ? "M1 2h11M1 4.5h11M1 7h11M1 9.5h11" : "M4 2h8M2 4.5h10M4 7h8M2 9.5h10"} /></svg>
);
const NavUp = ({ flip }: { flip?: boolean }) => (
  <svg width="7" height="7" viewBox="0 0 7 7" fill="#111" transform={flip ? "scale(1 -1)" : undefined}>
    <path d="M3.5 0L7 3H0zM0 5h7v1.5H0z" />
  </svg>
);
const NavDot = () => (
  <svg width="8" height="8" viewBox="0 0 8 8"><circle cx="4" cy="4" r="3.5" fill="#8a9097" stroke="#e8edf3" /></svg>
);

const Pin = () => (
  <svg width="9" height="14" viewBox="0 0 9 14" fill="#3f86d6"><path d="M1 0h7v1.5L7 2v4l2 2v1H5.2L4.5 14 3.8 9H0V8l2-2V2L1 1.5z" /></svg>
);
const Camera = () => (
  <svg width="15" height="13" viewBox="0 0 15 13"><path d="M1 3h3l1.5-2h4L11 3h3v9H1z" fill="#ddd" /><circle cx="7.5" cy="7.5" r="3" fill="#1a1b1d" /><circle cx="7.5" cy="7.5" r="1.6" fill="#ddd" /></svg>
);
const Pencil = () => (
  <svg width="13" height="13" viewBox="0 0 13 13" fill="#e8e8e8"><path d="M9 1l3 3-7 7-4 1 1-4z" /></svg>
);
const CloseX = () => (
  <svg width="11" height="11" viewBox="0 0 11 11" stroke="#cfcfcf" strokeWidth="1.2"><path d="M1 1l9 9M10 1l-9 9" /></svg>
);

const rulerH = ["2", "1", "", "1", "2", "3", "4", "5", "6", "7", "8", "9", "10", "11", "12", "13", "14", "15", "", "17", "18"];
const rulerV = ["2", "1", "", "1", "2", "3", "4", "5", "6", "7", "8", "9", "10", "11"];
const styleCards = [
  { t: "AaBbCcDc", l: "¶ No Spaci...", size: 13 },
  { t: "AaBbCc", l: "Heading 1", size: 17.5, color: "#2f5f92", bold: true },
  { t: "AaBbCc", l: "Heading 2", size: 15, color: "#4f81bd", bold: true },
  { t: "AaBbCcD", l: "Heading 3", size: 15, color: "#111", bold: true, serif: true },
  { t: "AaBbCcD", l: "Heading 4", size: 14, color: "#4f81bd", bold: true, italic: true },
  { t: "AaB", l: "Title", size: 30, color: "#17365d", top: 20, pl: 2 },
  { t: "AaBbC", l: "Subtitle", size: 14.5, color: "#6d8ab2", italic: true, ls: 0.4 },
];

export default function App() {
  return (
    <Screen>
      <Global />
      <TitleBar>
        <Qat>
          <QatIcon $w={18}><Undo /></QatIcon>
          <QatIcon $w={12}><Caret /></QatIcon>
          <QatIcon $w={18}><Redo /></QatIcon>
          <QatCombo>Verdana (Boc<Caret /></QatCombo>
        </Qat>
        <Customize>▼</Customize>
        <BlurredTitle><BlurRed /><BlurText /></BlurredTitle>
        <WindowButtons>
          <WindowButton $w={27}><svg width="11" height="5"><rect width="11" height="4" rx="1" y="1" fill="#f2f6fb" /></svg></WindowButton>
          <WindowButton $w={19}><svg width="10" height="10" fill="none" stroke="#f2f6fb" strokeWidth="1.4"><rect x="1" y="3" width="6" height="6" /><path d="M3 1h6v6" /></svg></WindowButton>
          <WindowButton $w={48}><svg width="11" height="10" stroke="#fff" strokeWidth="2.4"><path d="M1 1l9 8M10 1l-9 8" /></svg></WindowButton>
        </WindowButtons>
      </TitleBar>
      <OfficeOrbWrap><OfficeOrb /></OfficeOrbWrap>
      <Bandicam>
        <BarLines />
        <BarPin><Pin /></BarPin>
        <BarRes>1366x768</BarRes>
        <Watermark>www.BANDICAM.com</Watermark>
        <RedSquare />
        <BarTool $ml={17}><Camera /></BarTool>
        <BarTool $ml={12}><Pencil /></BarTool>
        <BarTool $ml={17}><CloseX /></BarTool>
      </Bandicam>

      <TabRow>
        <Tab $active $w={50}>Home</Tab>
        <Tab $w={58}>Insert</Tab>
        <Tab $w={84}>Page Layout</Tab>
        <Tab $w={80}>References</Tab>
        <Tab $w={70}>Mailings</Tab>
        <Tab $w={60}>Review</Tab>
        <Tab $w={50}>View</Tab>
        <Help>?</Help>
      </TabRow>

      <Ribbon>
        <Group $w={142}>
          <GroupBody>
            <PasteCol>
              <PasteIcon />
              <PasteLabel>Paste</PasteLabel>
              <Caret />
            </PasteCol>
            <ClipCol>
              <ClipItem $off><ClipIcon><CutIcon /></ClipIcon>Cut</ClipItem>
              <ClipItem $off><ClipIcon><CopyIcon /></ClipIcon>Copy</ClipItem>
              <ClipItem><ClipIcon><Painter /></ClipIcon>Format Painter</ClipItem>
            </ClipCol>
          </GroupBody>
          <GroupLabel>Clipboard<Launcher /></GroupLabel>
        </Group>

        <Group $w={246}>
          <GroupBody>
            <Col>
              <Row>
                <Combo $w={126}>Verdana (Body)<Caret /></Combo>
                <Combo $w={39} $ml={2}>11<Caret /></Combo>
                <BtnGroup $w={42} $ml={4}>
                  <Btn $w={20}><GrowMark>A</GrowMark></Btn>
                  <Btn $w={20}><GrowMark $small>A</GrowMark></Btn>
                </BtnGroup>
                <BtnGroup $w={23} $ml={3}><Btn $w={21}><ClearFmt /></Btn></BtnGroup>
              </Row>
              <Row>
                <BtnGroup $w={173}>
                  <Btn $w={20} $sep><BoldMark>B</BoldMark></Btn>
                  <Btn $w={22} $sep><ItalicMark>I</ItalicMark></Btn>
                  <Btn $w={36} $sep $gap={8}><UnderMark>U</UnderMark><Caret /></Btn>
                  <Btn $w={22} $sep><StrikeMark>abe</StrikeMark></Btn>
                  <Btn $w={22} $sep><ScriptMark>x<SubMark>2</SubMark></ScriptMark></Btn>
                  <Btn $w={22} $sep><ScriptMark>x<SubMark $up>2</SubMark></ScriptMark></Btn>
                  <Btn $w={26}><AaMark>Aa</AaMark><Caret /></Btn>
                </BtnGroup>
                <BtnGroup $w={64} $ml={2}>
                  <Btn $w={32}><Highlighter /><Caret /></Btn>
                  <Btn $w={30}>
                    <svg width="14" height="15" viewBox="0 0 14 15"><text x="1" y="10" fontSize="12" fontWeight="700" fontFamily="Liberation Serif" fill="#1d3f7a">A</text><rect y="12" width="14" height="3" fill="#000" /></svg>
                    <Caret />
                  </Btn>
                </BtnGroup>
              </Row>
            </Col>
          </GroupBody>
          <GroupLabel>Font<Launcher /></GroupLabel>
        </Group>

        <Group $w={197}>
          <GroupBody>
            <Col>
              <Row>
                <BtnGroup $w={92}>
                  <Btn $w={33} $gap={5}><Bullets /><Caret /></Btn>
                  <Btn $w={33} $gap={5}><Numbers /><Caret /></Btn>
                  <Btn $w={24}><Multi /><Caret /></Btn>
                </BtnGroup>
                <BtnGroup $w={42} $ml={4}>
                  <Btn $w={20}><Indent dir="l" /></Btn>
                  <Btn $w={20}><Indent dir="r" /></Btn>
                </BtnGroup>
                <BtnGroup $w={23} $ml={3}><Btn $w={21}><Sort /></Btn></BtnGroup>
                <BtnGroup $w={23} $ml={2}><Btn $w={21}><PilcrowMark>¶</PilcrowMark></Btn></BtnGroup>
              </Row>
              <Row>
                <BtnGroup $w={87}>
                  <Btn $w={21} $active><Bars kind="left" /></Btn>
                  <Btn $w={22}><Bars kind="center" /></Btn>
                  <Btn $w={22}><Bars kind="right" /></Btn>
                  <Btn $w={20}><Bars kind="justify" /></Btn>
                </BtnGroup>
                <BtnGroup $w={30} $ml={3}><Btn $w={28}><LineSpacing /><Caret /></Btn></BtnGroup>
                <BtnGroup $w={62} $ml={4}>
                  <Btn $w={32}><Bucket /><Caret /></Btn>
                  <Btn $w={28}><Borders /><Caret /></Btn>
                </BtnGroup>
              </Row>
            </Col>
          </GroupBody>
          <GroupLabel>Paragraph<Launcher /></GroupLabel>
        </Group>

        <Group $w={611}>
          <GroupBody $pl={0}>
            <Gallery>
              <StyleCard $active>
                <Sample $size={13} $top={24} $pl={3}>AaBbCcDc</Sample>
                <SampleLabel>¶ Normal</SampleLabel>
              </StyleCard>
              {styleCards.map((c) => (
                <StyleCard key={c.l}>
                  <Sample $size={c.size} $color={c.color} $bold={c.bold} $italic={c.italic} $serif={c.serif} $ls={c.ls} $top={c.top} $pl={c.pl}>{c.t}</Sample>
                  <SampleLabel>{c.l}</SampleLabel>
                </StyleCard>
              ))}
            </Gallery>
            <GalleryScroll>
              <ScrollCell $off>▲</ScrollCell>
              <ScrollCell>▼</ScrollCell>
              <ScrollCell>▼</ScrollCell>
            </GalleryScroll>
            <ChangeStyles>
              <StylesA />
              <span>Change Styles ▾</span>
            </ChangeStyles>
          </GroupBody>
          <GroupLabel>Styles<Launcher /></GroupLabel>
        </Group>

        <Group $w={72}>
          <GroupBody>
            <EditCol>
              <EditItem><EditIcon><Binoculars /></EditIcon>Find<Caret /></EditItem>
              <EditItem><EditIcon><ReplaceIco /></EditIcon>Replace</EditItem>
              <EditItem><EditIcon><Arrow w={11} h={14} fill="#e8eef6" stroke="#5d7191" /></EditIcon>Select<Caret /></EditItem>
            </EditCol>
          </GroupBody>
          <GroupLabel $plain>Editing</GroupLabel>
        </Group>
      </Ribbon>

      <RulerRow>
        <TabStopBtn><TabStopInner /></TabStopBtn>
        <HRuler>
          {rulerH.map((n, i) => <HCell key={i}>{n}</HCell>)}
          <IndentTop><Hourglass /></IndentTop>
          <IndentRight><TriMarker /></IndentRight>
        </HRuler>
        <StopTicks />
        <RulerToggle>
          <svg width="7" height="11" viewBox="0 0 7 11" fill="none" stroke="#4f5f74"><rect x=".5" y=".5" width="5" height="5" /><path d="M2 7l4 3" /></svg>
        </RulerToggle>
      </RulerRow>

      <DocRow>
        <Swoosh />
        <VRulerCol>
          <VRuler>
            {rulerV.map((n, i) => <VCell key={i}><VNum>{n}</VNum></VCell>)}
          </VRuler>
        </VRulerCol>
        <PageArea>
          <Page>
            <Cursor><Arrow /></Cursor>
            <PoemTitle>Aku dan Hujan</PoemTitle>
            <PoemLead>{"Jalan itu menghitam,\nbasah oleh hujan."}</PoemLead>
            <PoemBody $mt={18}>{"Namun aku, muram,  Kering oleh kerinduan."}</PoemBody>
            <PoemBody $mt={18}>{"Gerimis ini menghapus jejak apapun,\nNamun kasihmu tak hilang dalam  hitungan tahun"}</PoemBody>
          </Page>
        </PageArea>
        <VScroll>
          <ScrollArrow><Caret /></ScrollArrow>
          <ScrollThumb>≡</ScrollThumb>
          <ScrollTrack />
          <ScrollArrow><Caret /></ScrollArrow>
          <ScrollNav><NavUp /></ScrollNav>
          <ScrollNav><NavDot /></ScrollNav>
          <ScrollNav><NavUp flip /></ScrollNav>
        </VScroll>
      </DocRow>

      <StatusBar>
        <StatusCell $w={73} $pl={8}>Page: 1 of 1</StatusCell>
        <StatusCell $w={65} $pl={8}>Words: 27</StatusCell>
        <StatusCell $w={31} $pl={8} $noSep>
          <svg width="16" height="14" viewBox="0 0 16 14" fill="none"><path d="M1 9h11l-2 4H3z" fill="#d5deea" stroke="#66789a" /><path d="M4 6l3 3 6-8" stroke="#33507a" strokeWidth="1.5" /></svg>
        </StatusCell>
        <StatusCell $w={127} $pl={8}>Indonesian (Indonesia)</StatusCell>
        <StatusRight>
          <Views>
            <ViewBtn $active><ViewIcon /></ViewBtn>
            <ViewBtn><ViewBook /></ViewBtn>
            <ViewBtn><ViewWeb /></ViewBtn>
            <ViewBtn><ViewLines /></ViewBtn>
            <ViewBtn><ViewLines dense /></ViewBtn>
          </Views>
          <Zoom>100%</Zoom>
          <RoundBtn>−</RoundBtn>
          <ZoomTrack><ZoomThumb /></ZoomTrack>
          <RoundBtn>+</RoundBtn>
        </StatusRight>
      </StatusBar>

      <Taskbar>
        <TrayBlur />
        <Orb><StartOrb /></Orb>
        <Gripper $ml={8} $mr={7} />
        <Slot><IEIcon /></Slot>
        <Slot><FolderIcon /></Slot>
        <Slot><WmpIcon /></Slot>
        <Slot><GlobeIcon /></Slot>
        <Slot $active $w={55} $ml={3} $mr={2}><ChromeIcon /></Slot>
        <Slot><ComputerIcon /></Slot>
        <Slot><BtBadge><FaBluetoothB /></BtBadge></Slot>
        <Slot $active $w={55} $ml={2}><WordIcon /></Slot>
        <Slot $active $w={55} $ml={3}><SpeakerIcon /></Slot>
        <Slot $active $w={54} $ml={4}><RecordIcon /></Slot>
        <Tray>
          <Gripper $ml={0} $mr={9} />
          <TrayLang>IN</TrayLang>
          <TrayIcon $w={12} $mt={4}><svg width="9" height="5"><path d="M4.5 0L9 5H0z" fill="#eaf0f6" /></svg></TrayIcon>
          <TrayIcon $w={26} $ml={4} $mt={4}><Battery /></TrayIcon>
          <TrayIcon $w={18} $mt={4}><Signal /></TrayIcon>
          <TrayIcon $w={28} $mt={4}><Volume /></TrayIcon>
          <Clock>10:49<br />02/11/2020</Clock>
        </Tray>
      </Taskbar>
    </Screen>
  );
}
